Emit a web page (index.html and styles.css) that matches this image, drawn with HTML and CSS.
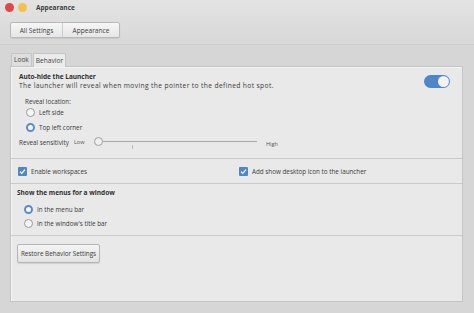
FILE: index.html
```html
<!DOCTYPE html>
<html>
<head>
<meta charset="utf-8">
<link rel="stylesheet" href="styles.css">
</head>
<body>
<div class="window">
  <header class="header">
    <div class="titlebar">
      <span class="dot red"></span>
      <span class="dot yellow"></span>
      <span class="title">Appearance</span>
    </div>
    <div class="toolbar">
      <div class="btngroup">
        <button class="tbtn first">All Settings</button>
        <button class="tbtn">Appearance</button>
      </div>
    </div>
  </header>
  <div class="content">
    <div class="tabs">
      <div class="tab">Look</div>
      <div class="tab active">Behavior</div>
    </div>
    <div class="panel">
      <section class="sec autohide">
        <div class="row-title">
          <div>
            <div class="bold">Auto-hide the Launcher</div>
            <div class="sub">The launcher will reveal when moving the pointer to the defined hot spot.</div>
          </div>
          <div class="toggle"><span class="knob"></span></div>
        </div>
        <div class="label indent">Reveal location:</div>
        <div class="radio indent2"><span class="rb"></span>Left side</div>
        <div class="radio indent2 r2"><span class="rb on"></span>Top left corner</div>
        <div class="sens">
          <span class="sens-label">Reveal sensitivity</span>
          <span class="small low">Low</span>
          <div class="slider">
            <span class="track"></span>
            <span class="handle"></span>
            <span class="tick"></span>
          </div>
          <span class="small high">High</span>
        </div>
      </section>
      <section class="sec checks">
        <div class="check"><span class="cb">
          <svg viewBox="0 0 9 9" width="9" height="9"><path d="M2 4.6 L3.8 6.4 L7 2.6" fill="none" stroke="#fff" stroke-width="1.3"/></svg>
        </span>Enable workspaces</div>
        <div class="check c2"><span class="cb">
          <svg viewBox="0 0 9 9" width="9" height="9"><path d="M2 4.6 L3.8 6.4 L7 2.6" fill="none" stroke="#fff" stroke-width="1.3"/></svg>
        </span>Add show desktop icon to the launcher</div>
      </section>
      <section class="sec menus">
        <div class="bold">Show the menus for a window</div>
        <div class="radio m1"><span class="rb on"></span>In the menu bar</div>
        <div class="radio m2"><span class="rb"></span>In the window's title bar</div>
      </section>
      <section class="sec restore">
        <button class="rbtn">Restore Behavior Settings</button>
      </section>
    </div>
  </div>
</div>
</body>
</html>
```

FILE: styles.css
```css
* { box-sizing: border-box; }
html, body { margin: 0; padding: 0; }
body {
  width: 474px;
  height: 313px;
  overflow: hidden;
  background: #d6d6d6;
  font-family: "Open Sans", "DejaVu Sans", sans-serif;
  font-size: 6.3px;
  color: #3a3a3a;
  white-space: nowrap;
}
.window { width: 474px; height: 313px; display: flex; flex-direction: column; }
.header {
  height: 45px;
  background: linear-gradient(#e3e3e3, #d8d8d8);
  border-bottom: 1px solid #cdcdcd;
  flex: none;
}
.titlebar { height: 15px; display: flex; align-items: center; padding-left: 5px; }
.dot { width: 9px; height: 9px; border-radius: 50%; margin-right: 4px; }
.red { background: #e04848; }
.yellow { background: #f2c24a; }
.title { font-weight: 700; color: #404040; margin-left: 5px; font-size: 6.5px; }
.toolbar { padding: 7px 0 0 10px; }
.btngroup {
  display: inline-flex;
  border: 1px solid #b9b9b9;
  border-radius: 2px;
  background: linear-gradient(#f6f6f6, #e6e6e6);
  box-shadow: 0 1px 1px rgba(0,0,0,0.08);
  height: 16px;
}
.tbtn {
  font: inherit;
  font-size: 6.6px;
  color: #3c3c3c;
  background: transparent;
  border: 0;
  padding: 0;
  height: 14px;
}
.tbtn.first { width: 52px; border-right: 1px solid #cdcdcd; }
.tbtn:not(.first) { width: 56px; }
.content { padding: 7px 11px 0 10px; flex: none; }
.tabs { display: flex; gap: 1px; padding-left: 1px; height: 14px; align-items: flex-end; }
.tab {
  height: 13px;
  padding: 0 2px;
  line-height: 12px;
  border: 1px solid #c4c4c4;
  border-bottom: 0;
  background: #dedede;
  border-radius: 2px 2px 0 0;
  color: #444;
  font-size: 6.6px;
}
.tab.active {
  height: 14px;
  line-height: 13px;
  background: #ebebeb;
  position: relative;
  top: 1px;
}
.panel {
  width: 453px;
  height: 236px;
  background: #e9e9e9;
  border: 1px solid #c4c4c4;
  box-shadow: 1px 1px 0 #f4f4f4 inset;
}
.sec { border-bottom: 1px solid #cacaca; position: relative; }
.bold { font-weight: 700; color: #2e2e2e; font-size: 6.5px; }
.autohide { height: 92px; padding: 5px 12px 0 8px; }
.row-title { display: flex; justify-content: space-between; align-items: flex-start; }
.sub { font-size: 6.7px; color: #3a3a3a; letter-spacing: 0.36px; line-height: 9px; }
.toggle {
  width: 26px; height: 13px; border-radius: 7px;
  background: #4f86c8;
  margin-top: 3px;
  position: relative;
}
.knob {
  position: absolute; right: 1px; top: 1px;
  width: 11px; height: 11px; border-radius: 50%;
  background: #f3f3f3;
}
.label { margin-top: 7px; line-height: 9px; }
.indent { padding-left: 6px; }
.radio { display: flex; align-items: center; gap: 4px; height: 10px; }
.indent2 { padding-left: 7px; margin-top: 1px; }
.indent2.r2 { margin-top: 5px; }
.rb {
  width: 9px; height: 9px; border-radius: 50%;
  border: 1px solid #9a9a9a;
  background: #f5f5f5;
  flex: none;
}
.rb.on {
  border: 2.5px solid #5a8ccc;
  background: #f8f8f8;
}
.sens { display: flex; align-items: center; margin-top: 5px; height: 10px; }
.sens-label { width: 55px; }
.small { font-size: 5.5px; color: #555; }
.low { width: 20px; }
.slider { position: relative; width: 163px; height: 10px; }
.track { position: absolute; left: 6px; right: 0; top: 4px; height: 1px; background: #a8a8a8; }
.handle {
  position: absolute; left: 0; top: 0; width: 9px; height: 9px; border-radius: 50%;
  border: 1px solid #9f9f9f; background: #efefef;
}
.tick { position: absolute; left: 38px; top: 8px; width: 1px; height: 4px; background: #bdbdbd; }
.high { margin-left: 9px; margin-top: 3px; }
.checks { height: 25px; display: flex; align-items: center; padding-left: 7px; }
.check { display: flex; align-items: center; gap: 4px; }
.check.c2 { position: absolute; left: 228px; top: 8px; }
.cb {
  width: 9px; height: 9px; background: #4f86c8; border-radius: 1px;
  display: flex; align-items: center; justify-content: center;
  border: 0;
}
.cb svg { display: block; }
.menus { height: 52px; padding: 4px 0 0 6px; }
.radio.m1 { padding-left: 7px; margin-top: 7px; }
.radio.m2 { padding-left: 7px; margin-top: 4px; }
.restore { border-bottom: 0; padding: 8px 0 0 6px; }
.rbtn {
  font: inherit;
  color: #3a3a3a;
  width: 83px; height: 19px;
  padding: 0;
  border: 1px solid #b5b5b5;
  border-radius: 2px;
  background: linear-gradient(#f4f4f4, #e2e2e2);
  box-shadow: 0 1px 1px rgba(0,0,0,0.1);
}
```
